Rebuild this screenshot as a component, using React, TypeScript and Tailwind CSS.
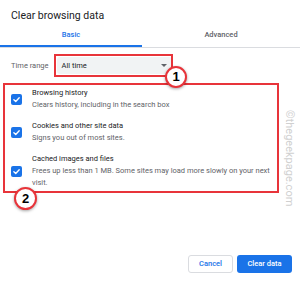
import { type FC, type ReactElement } from "react";

type Item = { title: string; desc: string };

const items: Item[] = [
  { title: "Browsing history", desc: "Clears history, including in the search box" },
  { title: "Cookies and other site data", desc: "Signs you out of most sites." },
  {
    title: "Cached images and files",
    desc: "Frees up less than 1 MB. Some sites may load more slowly on your next visit.",
  },
];

const CheckBox: FC = (): ReactElement => (
  <span className="flex h-[11px] w-[11px] shrink-0 items-center justify-center rounded-[2px] bg-[#1a73e8]">
    <svg className="h-[9px] w-[9px]" viewBox="0 0 12 12" fill="none">
      <path d="M2.5 6.2 5 8.6 9.6 3.6" stroke="white" strokeWidth={1.8} strokeLinecap="round" strokeLinejoin="round" />
    </svg>
  </span>
);

const Badge: FC<{ n: string; className: string }> = ({ n, className }): ReactElement => (
  <span
    className={`absolute flex items-center justify-center rounded-full border-2 border-[#e8343a] bg-white font-['Liberation_Sans',sans-serif] text-[13px] font-bold text-black shadow-[0_1px_3px_rgba(0,0,0,0.35)] ${className}`}
  >
    {n}
  </span>
);

export default function App(): ReactElement {
  return (
    <div className="relative h-[282px] w-[300px] overflow-hidden bg-white font-['Roboto',sans-serif] text-[#202124]">
      <div className="px-[11px] pt-[9px] text-[10.5px] leading-[13px]">Clear browsing data</div>

      {/* Tabs */}
      <div className="mt-[6px] flex border-b border-[#dadce0] text-[7.5px] font-medium">
        <div className="flex h-[19px] w-[142px] items-start justify-center border-b-2 border-[#1a73e8] pt-[1px] text-[#1a73e8]">
          Basic
        </div>
        <div className="flex h-[19px] flex-1 items-start justify-center pt-[1px] text-[#5f6368]">Advanced</div>
      </div>

      {/* Time range */}
      <div className="mt-[9px] flex items-center gap-[8px] pl-[11px]">
        <span className="text-[7.5px] text-[#5f6368]">Time range</span>
        <div className="flex h-[17px] w-[115px] items-center justify-between rounded-[3px] bg-[#f1f3f4] pl-[5px] pr-[5px] text-[7.5px]">
          <span>All time</span>
          <span className="h-0 w-0 border-x-[3px] border-t-[3px] border-x-transparent border-t-[#5f6368]" />
        </div>
      </div>

      {/* Options */}
      <div className="mt-[13px] flex flex-col gap-[9px] pl-[11px] pr-[24px]">
        {items.map((item) => (
          <div key={item.title} className="flex items-center gap-[10px]">
            <CheckBox />
            <div className="text-[7.5px] leading-[12px]">
              <div className="text-[#202124]">{item.title}</div>
              <div className="text-[#5f6368]">{item.desc}</div>
            </div>
          </div>
        ))}
      </div>

      {/* Buttons */}
      <div className="absolute bottom-[9px] right-[8px] flex gap-[4px] text-[7.5px] font-medium">
        <button type="button" className="h-[18px] w-[45px] rounded-[3px] border border-[#dadce0] bg-white text-[#1a73e8]">
          Cancel
        </button>
        <button type="button" className="h-[18px] w-[55px] rounded-[3px] bg-[#1a73e8] text-white">
          Clear data
        </button>
      </div>

      {/* Annotations */}
      <div className="pointer-events-none absolute left-[54px] top-[54px] h-[23px] w-[119px] border-2 border-[#e8343a]" />
      <div className="pointer-events-none absolute left-[3px] top-[83px] h-[110px] w-[276px] border-2 border-[#e8343a]" />
      <Badge n="1" className="left-[165px] top-[66px] h-[22px] w-[22px]" />
      <Badge n="2" className="left-[14px] top-[187px] h-[23px] w-[23px]" />
      <div className="absolute left-[284px] top-[110px] origin-top-left translate-x-[13px] rotate-90 whitespace-nowrap text-[11px] text-[#d0d0d0]">
        ©thegeekpage.com
      </div>
    </div>
  );
}
